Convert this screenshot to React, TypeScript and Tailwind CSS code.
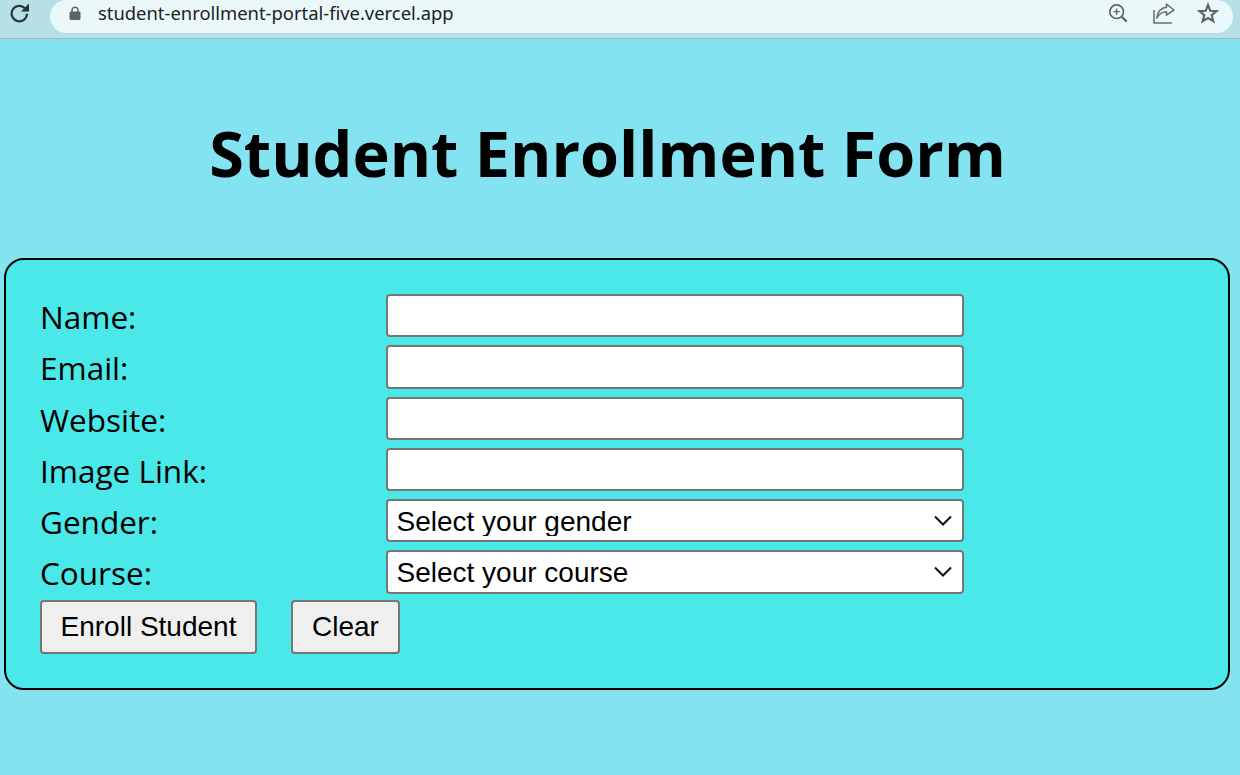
import React from "react";

function Reload() {
  return (
    <svg width="20" height="20" viewBox="0 0 20 20" fill="none" className="ml-[10px]">
      <path d="M17 10.800a7.700 7.700 0 1 1-2.300-5.700" stroke="#2b2f31" strokeWidth="2.100" />
      <path d="M19 .6v8h-8z" fill="#2b2f31" />
    </svg>
  );
}

function Lock() {
  return (
    <svg width="12" height="14" viewBox="0 0 12 14" fill="none">
      <path d="M3 6V4.200a3 3 0 0 1 6 0V6" stroke="#5f6368" strokeWidth="1.400" />
      <rect x="0.500" y="5.500" width="11" height="8.500" rx="1.400" fill="#5f6368" />
    </svg>
  );
}

function Zoom() {
  return (
    <svg width="20" height="20" viewBox="0 0 22 22" fill="none" stroke="#5f6368" strokeWidth="1.800">
      <circle cx="9.500" cy="9.500" r="7.500" />
      <path d="M14.600 14.600 20.500 20.500" strokeWidth="2.400" />
      <path d="M9.500 6v7M6 9.500h7" strokeWidth="1.500" />
    </svg>
  );
}

function Share() {
  return (
    <svg width="24" height="22" viewBox="0 0 24 22" fill="none" stroke="#6b6f73" strokeWidth="1.600">
      <path d="M2 8v13h18" />
      <path d="M14.500 2 22 8l-7.500 5.200v-3.400C10 9.800 7 12 4.800 16 5.500 10 9 5.800 14.500 5.200z" strokeLinejoin="round" />
    </svg>
  );
}

function Star() {
  return (
    <svg width="22" height="22" viewBox="0 0 22 22" fill="none" stroke="#5f6368" strokeWidth="2.200" strokeLinejoin="miter">
      <path d="M11 3l2.300 5.800 6.200.4-4.800 4 1.600 6L11 16l-5.300 3.200 1.600-6-4.800-4 6.200-.4z" />
    </svg>
  );
}

const labels = ["Name:", "Email:", "Website:", "Image Link:"];

function Label({ children }: { children: React.ReactNode }) {
  return <label className="w-[346px] shrink-0 pt-[1px] text-[31.500px] leading-[43px] text-black">{children}</label>;
}

export default function App() {
  return (
    <div className="h-[775px] w-[1240px] overflow-hidden bg-[#84e3f0] font-['Open_Sans',sans-serif]">
      <div className="flex h-[39px] items-start border-b border-[#a3b8bd] bg-[#b6e0e6]">
        <div className="flex h-[33px] w-[50px] items-center pb-[7px]">
          <Reload />
        </div>
        <div className="flex h-[33px] w-[1183px] items-center rounded-[17px] bg-[#ebf8f9] pb-[7px] pl-[19px]">
          <Lock />
          <span className="ml-[17px] text-[18.400px] text-[#202124] font-['Noto_Sans',sans-serif]">student-enrollment-portal-five.vercel.app</span>
          <div className="ml-auto flex items-center pr-[14px]">
            <Zoom />
            <div className="ml-[24px] mr-[21px]">
              <Share />
            </div>
            <Star />
          </div>
        </div>
      </div>
      <h1 className="mt-[70px] pr-[25px] text-center text-[63px] font-bold leading-[87px] text-black">Student Enrollment Form</h1>
      <form className="ml-[4px] mt-[62px] flex h-[432px] w-[1226px] flex-col rounded-[20px] border-2 border-black bg-[#4ae8e8] pl-[34px] pt-[34px]">
        <div className="flex flex-col gap-[8px]">
          {labels.map((l) => (
            <div key={l} className="flex h-[43.300px]">
              <Label>{l}</Label>
              <input type="text" className="h-[43.300px] w-[578px] rounded-[4px] border-2 border-[#767676] bg-white" />
            </div>
          ))}
          {["gender", "course"].map((k) => (
            <div key={k} className="flex h-[43.300px]">
              <Label>{k === "gender" ? "Gender:" : "Course:"}</Label>
              <div className="relative h-[43.300px] w-[578px]">
                <select className="h-full w-full appearance-none rounded-[4px] border-2 border-[#767676] bg-white pb-[4px] pl-[8.500px] font-['Liberation_Sans',sans-serif] text-[28px] text-black">
                  <option>Select your {k}</option>
                </select>
                <svg width="18" height="11" viewBox="0 0 18 11" fill="none" className="pointer-events-none absolute right-[12px] top-[16px]">
                  <path d="M1 1.500 9 9.500l8-8" stroke="#111" strokeWidth="2" />
                </svg>
              </div>
            </div>
          ))}
        </div>
        <div className="mt-[6.200px] flex gap-[34px]">
          <button type="button" className="h-[54px] w-[217px] rounded-[4px] border-2 border-[#767676] bg-[#efefef] font-['Liberation_Sans',sans-serif] text-[28px] text-black">Enroll Student</button>
          <button type="button" className="h-[54px] w-[109px] rounded-[4px] border-2 border-[#767676] bg-[#efefef] font-['Liberation_Sans',sans-serif] text-[28px] text-black">Clear</button>
        </div>
      </form>
    </div>
  );
}
